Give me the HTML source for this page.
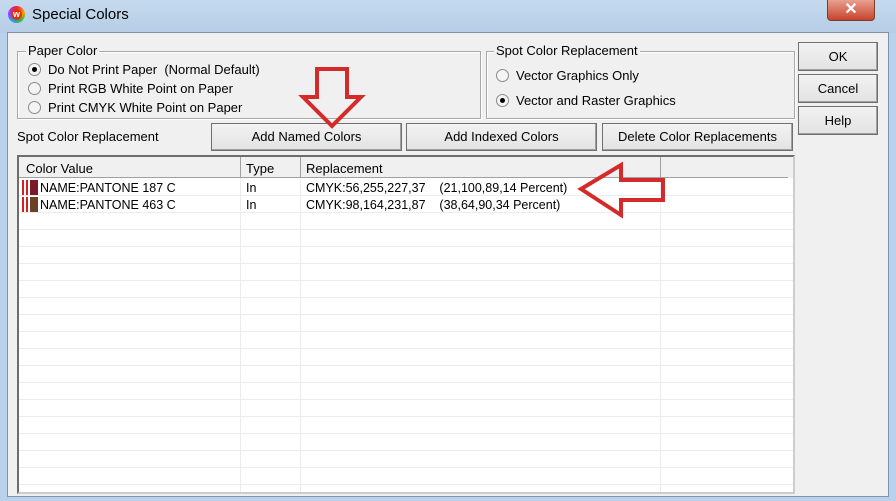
<!DOCTYPE html>
<html><head><style>
body{margin:0;width:896px;height:501px;overflow:hidden;font-family:"Liberation Sans",sans-serif;font-size:13px;color:#000;background:#b9d1ea;position:relative}
.abs{position:absolute}
.title{left:0;top:0;width:896px;height:33px;background:linear-gradient(#c6daee,#b5cde6)}
.client{left:7px;top:32px;width:882px;height:465px;background:#f0f0f0;border:1px solid #7f93aa;box-sizing:border-box}
.grp{border:1px solid #a8a8a8;box-shadow:1px 1px 0 #fff,inset 1px 1px 0 #fff}
.lg{background:#f0f0f0;padding:0 2px}
.btn{background:linear-gradient(#f2f2f2,#e3e3e3);border:1px solid #707070;box-sizing:border-box;text-align:center;box-shadow:inset -1px -1px 0 #a0a0a0}
.radio{width:13px;height:13px;border-radius:50%;border:1px solid #8a8a8a;background:#f4f4f4;box-sizing:border-box}
.radio.on::after{content:"";position:absolute;left:3px;top:3px;width:5px;height:5px;border-radius:50%;background:#000}
.tbl{left:17px;top:155px;width:778px;height:339px;background:#fff;border:2px solid #6d6d6d;box-sizing:border-box;border-right-color:#ccc;border-bottom-color:#ccc}
</style></head><body>
<div class="abs title"></div>
<div class="abs" style="left:8px;top:6px;width:17px;height:17px;border-radius:50%;background:conic-gradient(#e23,#f90,#3b3,#29f,#a3f,#e23)"></div>
<div class="abs" style="left:11px;top:9px;width:11px;height:11px;border-radius:50%;background:#d31;color:#fff;font-size:9px;font-weight:bold;text-align:center;line-height:11px">w</div>
<div class="abs" style="left:32px;top:6px;font-size:15px">Special Colors</div>
<div class="abs" style="left:827px;top:0;width:46px;height:20px;background:linear-gradient(#e8a08f,#c8442c);border:1px solid #7a3b30;border-top:none;border-radius:0 0 4px 4px;color:#fff;text-align:center;font-weight:bold;font-size:16px;line-height:20px">✕</div>
<div class="abs client"></div>

<div class="abs grp" style="left:17px;top:51px;width:462px;height:66px"></div>
<div class="abs lg" style="left:26px;top:43px">Paper Color</div>
<div class="abs radio on" style="left:28px;top:63px"></div><div class="abs" style="left:48px;top:62px">Do Not Print Paper&nbsp; (Normal Default)</div>
<div class="abs radio" style="left:28px;top:82px"></div><div class="abs" style="left:48px;top:81px">Print RGB White Point on Paper</div>
<div class="abs radio" style="left:28px;top:101px"></div><div class="abs" style="left:48px;top:100px">Print CMYK White Point on Paper</div>

<div class="abs grp" style="left:486px;top:51px;width:307px;height:66px"></div>
<div class="abs lg" style="left:494px;top:43px">Spot Color Replacement</div>
<div class="abs radio" style="left:496px;top:69px"></div><div class="abs" style="left:516px;top:68px">Vector Graphics Only</div>
<div class="abs radio on" style="left:496px;top:94px"></div><div class="abs" style="left:516px;top:93px">Vector and Raster Graphics</div>

<div class="abs btn" style="left:798px;top:42px;width:80px;height:29px;line-height:27px">OK</div>
<div class="abs btn" style="left:798px;top:74px;width:80px;height:29px;line-height:27px">Cancel</div>
<div class="abs btn" style="left:798px;top:106px;width:80px;height:29px;line-height:27px">Help</div>

<div class="abs" style="left:17px;top:129px">Spot Color Replacement</div>
<div class="abs btn" style="left:211px;top:123px;width:191px;height:28px;line-height:26px">Add Named Colors</div>
<div class="abs btn" style="left:406px;top:123px;width:191px;height:28px;line-height:26px">Add Indexed Colors</div>
<div class="abs btn" style="left:602px;top:123px;width:191px;height:28px;line-height:26px">Delete Color Replacements</div>

<div class="abs tbl"></div>
<svg class="abs" style="left:19px;top:157px" width="774" height="335">
<rect x="0" y="0" width="774" height="21" fill="#f0f0f0"/>
<g stroke="#a0a0a0"><line x1="221.5" y1="0" x2="221.5" y2="21"/><line x1="281.5" y1="0" x2="281.5" y2="21"/><line x1="641.5" y1="0" x2="641.5" y2="21"/><line x1="0" y1="20.5" x2="769" y2="20.5"/></g>
<g stroke="#ececec">
<line x1="221.5" y1="21" x2="221.5" y2="335"/><line x1="281.5" y1="21" x2="281.5" y2="335"/><line x1="641.5" y1="21" x2="641.5" y2="335"/>
<line x1="0" x2="774" y1="38.5" y2="38.5"/><line x1="0" x2="774" y1="55.5" y2="55.5"/><line x1="0" x2="774" y1="72.5" y2="72.5"/><line x1="0" x2="774" y1="89.5" y2="89.5"/><line x1="0" x2="774" y1="106.5" y2="106.5"/><line x1="0" x2="774" y1="123.5" y2="123.5"/><line x1="0" x2="774" y1="140.5" y2="140.5"/><line x1="0" x2="774" y1="157.5" y2="157.5"/><line x1="0" x2="774" y1="174.5" y2="174.5"/><line x1="0" x2="774" y1="191.5" y2="191.5"/><line x1="0" x2="774" y1="208.5" y2="208.5"/><line x1="0" x2="774" y1="225.5" y2="225.5"/><line x1="0" x2="774" y1="242.5" y2="242.5"/><line x1="0" x2="774" y1="259.5" y2="259.5"/><line x1="0" x2="774" y1="276.5" y2="276.5"/><line x1="0" x2="774" y1="293.5" y2="293.5"/><line x1="0" x2="774" y1="310.5" y2="310.5"/><line x1="0" x2="774" y1="327.5" y2="327.5"/>
</g>
<rect x="3" y="23" width="2" height="15" fill="#d02020"/><rect x="7" y="23" width="2" height="15" fill="#d02020"/><rect x="11" y="23" width="8" height="15" fill="#7a1a28"/>
<rect x="3" y="40" width="2" height="15" fill="#d02020"/><rect x="7" y="40" width="2" height="15" fill="#d02020"/><rect x="11" y="40" width="8" height="15" fill="#6a4226"/>
</svg>
<div class="abs" style="left:26px;top:161px">Color Value</div>
<div class="abs" style="left:246px;top:161px">Type</div>
<div class="abs" style="left:306px;top:161px">Replacement</div>
<div class="abs" style="left:40px;top:181px;font-size:12.5px">NAME:PANTONE 187 C</div>
<div class="abs" style="left:246px;top:181px;font-size:12.5px">In</div>
<div class="abs" style="left:306px;top:181px;font-size:12.5px">CMYK:56,255,227,37&nbsp;&nbsp;&nbsp; (21,100,89,14 Percent)</div>
<div class="abs" style="left:40px;top:198px;font-size:12.5px">NAME:PANTONE 463 C</div>
<div class="abs" style="left:246px;top:198px;font-size:12.5px">In</div>
<div class="abs" style="left:306px;top:198px;font-size:12.5px">CMYK:98,164,231,87&nbsp;&nbsp;&nbsp; (38,64,90,34 Percent)</div>

<svg class="abs" style="left:0;top:0" width="896" height="501">
<path d="M317,69 L347,69 L347,97 L361,97 L332,126 L303,97 L317,97 Z" fill="none" stroke="#d42a2a" stroke-width="4" stroke-linejoin="miter"/>
<path d="M581,189 L621,165 L621,180 L663,180 L663,200 L621,200 L621,215 Z" fill="none" stroke="#d42a2a" stroke-width="4" stroke-linejoin="miter"/>
</svg>
</body></html>
